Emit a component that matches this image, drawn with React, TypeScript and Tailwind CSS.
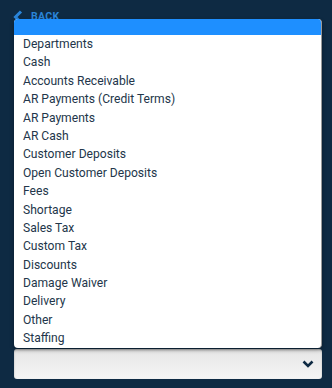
import React from 'react';

const items = [
    'Departments',
    'Cash',
    'Accounts Receivable',
    'AR Payments (Credit Terms)',
    'AR Payments',
    'AR Cash',
    'Customer Deposits',
    'Open Customer Deposits',
    'Fees',
    'Shortage',
    'Sales Tax',
    'Custom Tax',
    'Discounts',
    'Damage Waiver',
    'Delivery',
    'Other',
    'Staffing',
];

export default function App() {
    return (
        <div className="relative w-[332px] h-[388px] overflow-hidden bg-[#0e2a43] font-['Roboto',sans-serif]">
            {/* back link */}
            <div className="flex items-center gap-[8px] pl-[13px] pt-[10px] h-[24px]">
                <svg width="10" height="14" viewBox="0 0 10 14">
                    <path d="M8 1.5 L2.5 7 L8 12.5" fill="none" stroke="#2a84d8" strokeWidth="3" />
                </svg>
                <span className="text-[10.5px] font-bold tracking-[0.3px] text-[#2a84d8]">BACK</span>
            </div>

            {/* fields underneath the open list */}
            <div className="flex flex-col gap-[44px] px-[14px] pt-[149px]">
                <div className="h-[28px] rounded-[3px] bg-[#e4e4e4] border border-[#aaa]" />
                <div className="h-[26px] rounded-[3px] bg-[#e4e4e4] border border-[#aaa]" />
            </div>

            {/* select */}
            <div className="absolute left-[14px] right-[10px] top-[349px] h-[30px] rounded-[3px] bg-gradient-to-b from-[#e6e6e6] to-[#f5f5f5] shadow-[inset_0_1px_2px_rgba(0,0,0,0.25)] flex items-center justify-end pr-[8px]">
                <svg width="12" height="8" viewBox="0 0 12 8">
                    <path d="M1.5 1.5 L6 6 L10.5 1.5" fill="none" stroke="#0e2a43" strokeWidth="2.6" />
                </svg>
            </div>

            {/* open dropdown list */}
            <div className="absolute left-[14px] right-[10px] top-[19px] h-[329px] rounded-[4px] overflow-hidden bg-white border-r border-[#9a9a9a] shadow-[0_2px_4px_rgba(0,0,0,0.35)]">
                <div className="h-[16px] bg-[#1e8fff]" />
                <ul className="pl-[9px]">
                    {items.map((label) => (
                        <li key={label} className="h-[18.4px] leading-[18.4px] text-[12.1px] text-[#23364a] whitespace-nowrap">
                            {label}
                        </li>
                    ))}
                </ul>
            </div>
        </div>
    );
}
